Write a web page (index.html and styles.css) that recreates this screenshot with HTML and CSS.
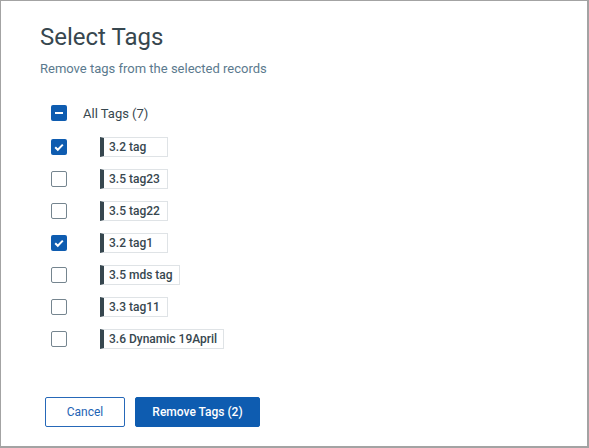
FILE: index.html
```html
<!DOCTYPE html>
<html>
<head>
<meta charset="utf-8">
<link rel="stylesheet" href="styles.css">
</head>
<body>
<div class="dialog">
  <h1 class="title">Select Tags</h1>
  <p class="subtitle">Remove tags from the selected records</p>
  <div class="list">
    <div class="row all">
      <span class="cb on"><svg viewBox="0 0 16 16" width="16" height="16"><rect x="4" y="7" width="8" height="2" fill="#fff"/></svg></span>
      <span class="all-label">All Tags (7)</span>
    </div>
    <div class="row">
      <span class="cb on"><svg viewBox="0 0 16 16" width="16" height="16"><path d="M4.2 8.3 L6.8 10.8 L11.8 5.6" fill="none" stroke="#fff" stroke-width="2"/></svg></span>
      <span class="tag">3.2 tag</span>
    </div>
    <div class="row">
      <span class="cb"></span>
      <span class="tag">3.5 tag23</span>
    </div>
    <div class="row">
      <span class="cb"></span>
      <span class="tag">3.5 tag22</span>
    </div>
    <div class="row">
      <span class="cb on"><svg viewBox="0 0 16 16" width="16" height="16"><path d="M4.2 8.3 L6.8 10.8 L11.8 5.6" fill="none" stroke="#fff" stroke-width="2"/></svg></span>
      <span class="tag">3.2 tag1</span>
    </div>
    <div class="row">
      <span class="cb"></span>
      <span class="tag">3.5 mds tag</span>
    </div>
    <div class="row">
      <span class="cb"></span>
      <span class="tag">3.3 tag11</span>
    </div>
    <div class="row">
      <span class="cb"></span>
      <span class="tag">3.6 Dynamic 19April</span>
    </div>
  </div>
  <div class="actions">
    <button class="btn cancel">Cancel</button>
    <button class="btn primary">Remove Tags (2)</button>
  </div>
</div>
</body>
</html>
```
FILE: styles.css
```css
html, body {
  margin: 0;
  padding: 0;
  background: #fff;
}
body {
  font-family: Roboto, "Liberation Sans", sans-serif;
}
.dialog {
  box-sizing: border-box;
  width: 589px;
  height: 448px;
  border-style: solid;
  border-color: #a3a3a3;
  border-width: 1px 2px 2px 1px;
  padding: 22px 0 0 39px;
  display: flex;
  flex-direction: column;
  background: #fff;
}
.title {
  margin: 0;
  font-size: 24px;
  line-height: 28px;
  font-weight: 400;
  color: #37474f;
}
.subtitle {
  margin: 10px 0 0;
  font-size: 13px;
  line-height: 16px;
  color: #5b7a8e;
}
.list {
  margin-top: 20px;
  padding-left: 11px;
  display: flex;
  flex-direction: column;
}
.row {
  height: 32px;
  display: flex;
  align-items: center;
}
.row.all {
  margin-bottom: 2px;
}
.cb {
  box-sizing: border-box;
  width: 16px;
  height: 16px;
  border: 1.5px solid #75858f;
  border-radius: 2px;
  flex: none;
  display: flex;
  align-items: center;
  justify-content: center;
}
.cb.on {
  border: none;
  background: #0e5cb0;
}
.cb svg {
  display: block;
}
.all-label {
  margin-left: 16px;
  font-size: 13px;
  color: #37474f;
}
.tag {
  box-sizing: border-box;
  margin-left: 33px;
  min-width: 68px;
  height: 20px;
  display: flex;
  align-items: center;
  border: 1px solid #dfe3e6;
  border-left: 4px solid #37474f;
  padding: 0 6px 0 5px;
  font-size: 12px;
  font-weight: 500;
  color: #37474f;
  white-space: nowrap;
}
.actions {
  margin-top: 42px;
  margin-left: 5px;
  display: flex;
  gap: 10px;
}
.btn {
  box-sizing: border-box;
  height: 30px;
  font-family: Roboto, "Liberation Sans", sans-serif;
  font-size: 12px;
  border-radius: 2px;
  padding: 0;
  cursor: pointer;
}
.cancel {
  width: 80px;
  background: #fff;
  border: 1px solid #2668b8;
  color: #1e63b4;
}
.primary {
  width: 125px;
  background: #0e5cb0;
  border: 1px solid #0e5cb0;
  color: #fff;
  font-weight: 500;
}
```
